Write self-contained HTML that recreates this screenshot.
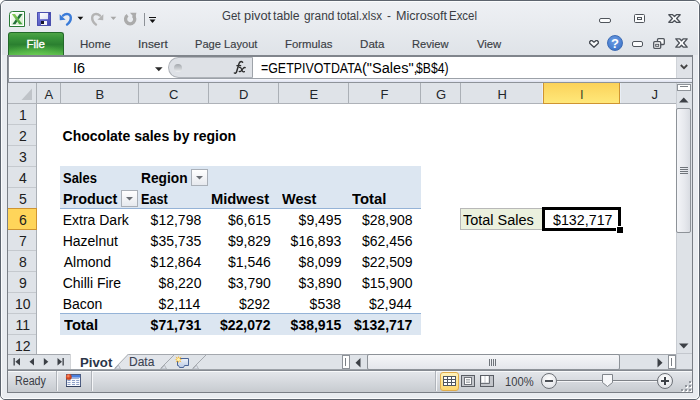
<!DOCTYPE html>
<html><head><meta charset="utf-8">
<style>
*{box-sizing:border-box}
html,body{margin:0;padding:0}
body{width:700px;height:400px;overflow:hidden;position:relative;background:#fff;font-family:"Liberation Sans",sans-serif}
.a{position:absolute}
.t{position:absolute;white-space:pre;line-height:1;transform-origin:0 0;font-family:"Liberation Sans",sans-serif}
.vl{position:absolute;width:1px;background:#abb0b6}
.hl{position:absolute;height:1px;background:#c5c9ce}
svg{position:absolute;overflow:visible}
</style></head><body>

<!-- window frame background -->
<div class="a" style="left:0;top:0;width:700px;height:400px;background:#e9ecf0;border:1px solid #5d646e;border-radius:6px 6px 5px 5px"></div>
<div class="a" style="left:1px;top:1px;width:698px;height:398px;border:1px solid #fbfcfd;border-radius:5px 5px 4px 4px"></div>
<!-- title + tabs gradient -->
<div class="a" style="left:2px;top:2px;width:696px;height:53px;border-radius:4px 4px 0 0;background:linear-gradient(#eef0f4,#e8ebef 45%,#dfe3e8)"></div>

<!-- QAT: excel icon -->
<svg style="left:9px;top:11px" width="16" height="16" viewBox="0 0 16 16">
  <defs><linearGradient id="xl" x1="0" y1="0" x2="1" y2="1"><stop offset="0" stop-color="#8fd05a"/><stop offset="1" stop-color="#3d9e3c"/></linearGradient>
  <linearGradient id="xb" x1="0" y1="0" x2="1" y2="1"><stop offset="0" stop-color="#ffffff"/><stop offset="1" stop-color="#d3ebc9"/></linearGradient></defs>
  <path d="M3.5 0.5H15.5V15.5H0.5V3.5Q0.5 0.5 3.5 0.5Z" fill="#fff" stroke="#2a7a36"/>
  <rect x="2" y="2" width="12" height="12" fill="url(#xb)"/>
  <path d="M10.6 3H13.6L6.4 13.2H3.4Z" fill="#23713a"/>
  <path d="M2.8 3H6L13.4 13.2H10.2Z" fill="url(#xl)"/>
</svg>
<div class="a" style="left:29px;top:13px;width:1px;height:13px;background:#8d9197"></div>
<!-- save -->
<svg style="left:37px;top:12px" width="14" height="14" viewBox="0 0 14 14">
  <defs><linearGradient id="sv" x1="0" y1="0" x2="1" y2="1"><stop offset="0" stop-color="#7b7fe0"/><stop offset="1" stop-color="#4146b0"/></linearGradient>
  <linearGradient id="sl" x1="0" y1="0" x2="1" y2="1"><stop offset="0" stop-color="#ffffff"/><stop offset="1" stop-color="#dfe3f2"/></linearGradient></defs>
  <path d="M0 0H14V13.8H0Z" fill="url(#sv)"/>
  <path d="M0.5 13.5V0.5H13.5V13.5Z" fill="none" stroke="#4a4fae" stroke-width="1"/>
  <rect x="3" y="1" width="8" height="6.2" fill="url(#sl)"/>
  <rect x="4" y="9" width="6" height="4" fill="#f4f4f8"/>
  <rect x="4" y="9" width="3" height="3" fill="#15152a"/>
  <rect x="12" y="1.5" width="1" height="1" fill="#2a2d70"/>
</svg>
<!-- undo -->
<svg style="left:59px;top:12px" width="14" height="14" viewBox="0 0 14 14">
  <path d="M4 3.6C7 1 11.5 1.5 11.8 5.5 12 8.5 10 11 8 12.6" fill="none" stroke="#3a7bd8" stroke-width="2.4" stroke-linecap="round"/>
  <path d="M0.6 2.2 0.8 8.2 6.6 7.8Z" fill="#3a7bd8"/>
</svg>
<svg style="left:77px;top:16px" width="7" height="5" viewBox="0 0 7 5"><path d="M0.5 0.8H6.3L3.4 4Z" fill="#111"/></svg>
<!-- redo (gray) -->
<svg style="left:90px;top:12px" width="14" height="14" viewBox="0 0 14 14">
  <path d="M10 3.6C7 1 2.5 1.5 2.2 5.5 2 8.5 4 11 6 12.6" fill="none" stroke="#b4b4b4" stroke-width="2.4" stroke-linecap="round"/>
  <path d="M13.4 2.2 13.2 8.2 7.4 7.8Z" fill="#b4b4b4"/>
</svg>
<svg style="left:110px;top:16px" width="7" height="5" viewBox="0 0 7 5"><path d="M0.5 0.8H6.3L3.4 4Z" fill="#a8a8a8"/></svg>
<!-- refresh (gray) -->
<svg style="left:123px;top:12px" width="14" height="14" viewBox="0 0 14 14">
  <path d="M4.6 3.4A4.6 4.6 0 1 0 10 3.6" fill="none" stroke="#ababab" stroke-width="3.3"/>
  <path d="M7 0.8H13.4L12.2 6.8Z" fill="#ababab"/>
</svg>
<div class="a" style="left:144px;top:13px;width:1px;height:13px;background:#8d9197"></div>
<div class="a" style="left:149px;top:17px;width:7px;height:1px;background:#111"></div>
<svg style="left:149px;top:19px" width="7" height="5" viewBox="0 0 7 5"><path d="M0.5 0.5H6.5L3.5 4Z" fill="#111"/></svg>

<!-- window controls -->
<div class="a" style="left:599px;top:18px;width:12px;height:5px;border:1.3px solid #50555c;border-radius:2px;background:#fbfcfd"></div>
<div class="a" style="left:634px;top:14px;width:11px;height:9px;border:1.3px solid #50555c;border-radius:1.5px;background:#fbfcfd"></div>
<div class="a" style="left:637px;top:17px;width:5px;height:3px;border:1px solid #50555c;"></div>
<svg style="left:668px;top:14px" width="13" height="9" viewBox="0 0 13 9"><path d="M0.8 0.7H4.6L6.5 2.5 8.4 0.7H12.2L8.6 4.5 12.2 8.3H8.4L6.5 6.5 4.6 8.3H0.8L4.4 4.5Z" fill="#fbfcfd" stroke="#4c5158" stroke-width="1.3" stroke-linejoin="round"/></svg>

<!-- ribbon right controls -->
<svg style="left:589px;top:40px" width="10" height="8" viewBox="0 0 10 8"><path d="M5 2.2 6.8 0.7H8.4L9.3 1.7V3.2L5 7.2 0.7 3.2V1.7L1.6 0.7H3.2Z" fill="#fbfcfd" stroke="#43484f" stroke-width="1.3" stroke-linejoin="round"/></svg>
<div class="a" style="left:607px;top:35px;width:16px;height:16px;border-radius:50%;background:radial-gradient(circle at 45% 35%,#6e9de2,#4a80d2 60%,#3567bb);border:1px solid #3d6cb5"></div>
<div class="a" style="left:607px;top:35.5px;width:16px;height:16px;color:#fff;font:bold 13px/16px 'Liberation Sans',sans-serif;text-align:center">?</div>
<div class="a" style="left:632px;top:41px;width:11px;height:6px;border:1.3px solid #50555c;border-radius:2px;background:#fbfcfd"></div>
<svg style="left:653px;top:38px" width="12" height="11" viewBox="0 0 12 11">
  <rect x="4.5" y="0.7" width="6.8" height="5.8" rx="1" fill="#fbfcfd" stroke="#50555c" stroke-width="1.3"/>
  <rect x="0.7" y="3.7" width="7" height="6.6" rx="1" fill="#fbfcfd" stroke="#50555c" stroke-width="1.3"/>
  <rect x="2.7" y="6.3" width="3" height="2" fill="none" stroke="#50555c" stroke-width="1"/>
</svg>
<svg style="left:675px;top:38px" width="13" height="10" viewBox="0 0 13 10"><path d="M0.8 0.8H4.6L6.5 2.8 8.4 0.8H12.2L8.6 5 12.2 9.2H8.4L6.5 7.2 4.6 9.2H0.8L4.4 5Z" fill="#fbfcfd" stroke="#4c5158" stroke-width="1.3" stroke-linejoin="round"/></svg>

<!-- File tab -->
<div class="a" style="left:8px;top:32px;width:56px;height:24px;border-radius:3px 3px 0 0;border:1px solid #23692a;border-bottom:none;background:linear-gradient(#4ea546 0%,#3a953b 20%,#2b8030 50%,#3f9c3b 75%,#5fbf4f 100%)"></div>
<div class="a" style="left:9px;top:33px;width:54px;height:22px;border-radius:2px 2px 0 0;background:radial-gradient(ellipse 60% 50% at 50% 100%,rgba(120,220,90,0.5),rgba(60,160,50,0) 100%)"></div>

<!-- ribbon bottom line -->
<div class="a" style="left:7px;top:55px;width:686px;height:2px;background:#80858c"></div>

<!-- formula bar area -->
<div class="a" style="left:8px;top:57px;width:684px;height:21px;background:#fff"></div>
<div class="a" style="left:7px;top:55px;width:1px;height:338px;background:#7a7f86"></div>
<div class="a" style="left:8px;top:57px;width:1px;height:26px;background:#8e9399"></div>
<div class="a" style="left:692px;top:55px;width:1px;height:338px;background:#7a7f86"></div>
<div class="a" style="left:7px;top:392px;width:686px;height:1px;background:#7a7f86"></div>
<!-- name box dropdown -->
<svg style="left:155px;top:67px" width="8" height="5" viewBox="0 0 8 5"><path d="M0 0.3H7.6L3.8 4.3Z" fill="#2a2a2a"/></svg>
<!-- fx capsule -->
<div class="a" style="left:168px;top:57px;width:85px;height:21px;background:#dee1e6;border-radius:11px 0 0 11px;border:1px solid #afb3b9;border-right:1px solid #9ea3a9"></div>
<div class="a" style="left:173.5px;top:63.5px;width:8.5px;height:8.5px;border-radius:50%;background:linear-gradient(#a3a7ac,#c9ccd0 55%,#eef0f2)"></div>
<svg style="left:233px;top:61px" width="14" height="14" viewBox="0 0 14 14">
  <path d="M9.6 1.2C8.2 0 6.6 0.6 6 2.6L3.6 10.8C3.2 12.2 2.2 12.6 1.4 12" fill="none" stroke="#2e2e2e" stroke-width="1.5" stroke-linecap="round"/>
  <path d="M3.4 4.6H8.2" stroke="#2e2e2e" stroke-width="1.3"/>
  <path d="M6.2 6.4C7.4 6 8 6.6 8.6 8.2L9.6 10.4C10 11 10.6 11 11.4 10.6M12.2 6.6C11.4 6.2 10.8 6.6 10 7.6L8.4 9.6C7.8 10.4 7.2 10.8 6.2 10.4" fill="none" stroke="#2e2e2e" stroke-width="1.3" stroke-linecap="round"/>
</svg>
<!-- expand button -->
<div class="a" style="left:676px;top:57px;width:16px;height:21px;background:#dfe2e7;border-left:1px solid #cfd3d8"></div>
<svg style="left:680px;top:64px" width="8" height="6" viewBox="0 0 8 6"><path d="M0.8 1 4 4.2 7.2 1" fill="none" stroke="#444" stroke-width="1.8"/></svg>

<div class="a" style="left:8px;top:78px;width:684px;height:1px;background:#9ca1a8"></div>
<div class="a" style="left:9px;top:79px;width:683px;height:3px;background:linear-gradient(#f8f9fc,#dde1f0)"></div>
<div class="a" style="left:8px;top:82px;width:684px;height:1px;background:#8e9399"></div>

<!-- column header -->
<div class="a" style="left:8px;top:83px;width:668px;height:20px;background:#dfe3e8"></div>
<svg style="left:21px;top:88px" width="12" height="13" viewBox="0 0 12 13"><path d="M11 0.5V12H0.5Z" fill="#bfc3c8"/></svg>
<div class="a" style="left:8px;top:103px;width:668px;height:1px;background:#aeb2b8"></div>
<div class="vl" style="left:36px;top:83px;height:20px"></div>
<div class="vl" style="left:60px;top:83px;height:20px"></div>
<div class="vl" style="left:138px;top:83px;height:20px"></div>
<div class="vl" style="left:208px;top:83px;height:20px"></div>
<div class="vl" style="left:278px;top:83px;height:20px"></div>
<div class="vl" style="left:348px;top:83px;height:20px"></div>
<div class="vl" style="left:420px;top:83px;height:20px"></div>
<div class="vl" style="left:460px;top:83px;height:20px"></div>
<!-- selected I header -->
<div class="a" style="left:543px;top:83px;width:77px;height:21px;background:linear-gradient(#fbd25a,#ffe87a);border:1px solid #cf9431;border-top:none"></div>
<div class="a" style="left:542px;top:83px;width:1px;height:20px;background:#e8eef6"></div>
<div class="a" style="left:620px;top:83px;width:1px;height:20px;background:#e8eef6"></div>

<!-- grid white -->
<div class="a" style="left:37px;top:104px;width:639px;height:250px;background:#fff"></div>
<!-- row header -->
<div class="a" style="left:8px;top:104px;width:28px;height:251px;background:#dfe3e8"></div>
<div class="vl" style="left:36px;top:104px;height:251px"></div>
<div class="hl" style="left:8px;top:124px;width:28px"></div>
<div class="hl" style="left:8px;top:145px;width:28px"></div>
<div class="hl" style="left:8px;top:166px;width:28px"></div>
<div class="hl" style="left:8px;top:187px;width:28px"></div>
<div class="hl" style="left:8px;top:250px;width:28px"></div>
<div class="hl" style="left:8px;top:271px;width:28px"></div>
<div class="hl" style="left:8px;top:292px;width:28px"></div>
<div class="hl" style="left:8px;top:313px;width:28px"></div>
<div class="hl" style="left:8px;top:334px;width:28px"></div>
<!-- selected row 6 -->
<div class="a" style="left:8px;top:208px;width:29px;height:22px;background:#ffd55a;border:1px solid #cf9431;border-left:none"></div>

<!-- pivot band -->
<div class="a" style="left:60px;top:166px;width:361px;height:42px;background:#dce6f1"></div>
<div class="a" style="left:60px;top:208px;width:361px;height:1px;background:#95b3d7"></div>
<div class="a" style="left:60px;top:313px;width:361px;height:1px;background:#95b3d7"></div>
<div class="a" style="left:60px;top:314px;width:361px;height:21px;background:#dce6f1"></div>
<!-- dropdown buttons -->
<div class="a" style="left:191px;top:169px;width:17px;height:17px;border:1px solid #a9afb7;background:linear-gradient(#ffffff,#e6e9ee)"></div>
<svg style="left:196px;top:176px" width="7" height="4" viewBox="0 0 7 4"><path d="M0 0H7L3.5 3.5Z" fill="#6a6e74"/></svg>
<div class="a" style="left:121px;top:190px;width:17px;height:17px;border:1px solid #a9afb7;background:linear-gradient(#ffffff,#e6e9ee)"></div>
<svg style="left:126px;top:197px" width="7" height="4" viewBox="0 0 7 4"><path d="M0 0H7L3.5 3.5Z" fill="#6a6e74"/></svg>

<!-- total sales box -->
<div class="a" style="left:460px;top:208px;width:84px;height:22px;background:#ebf0de;border:1px solid #b8b8b8"></div>
<!-- selection -->
<div class="a" style="left:542px;top:207px;width:79px;height:24px;border:3px solid #000;"></div>
<div class="a" style="left:545px;top:210px;width:73px;height:18px;background:#fff"></div>
<div class="a" style="left:616px;top:226px;width:7px;height:7px;background:#000;border:1px solid #fff;border-right:none;border-bottom:none"></div>

<!-- vertical scrollbar -->
<div class="a" style="left:676px;top:83px;width:16px;height:271px;background:#dee2e7;border-left:1px solid #c8ccd2"></div>
<div class="a" style="left:677px;top:84px;width:14px;height:7px;background:#fff;border:1px solid #8e9399"></div>
<div class="a" style="left:680px;top:86px;width:8px;height:1px;background:#7d8288"></div>
<svg style="left:679px;top:97px" width="10" height="6" viewBox="0 0 10 6"><path d="M0 5.5H9.5L4.75 0.5Z" fill="#3c4046"/></svg>
<div class="a" style="left:676px;top:108px;width:15px;height:125px;border:1px solid #8d9298;border-radius:2px;background:linear-gradient(90deg,#f4f5f8,#e6e8ed 60%,#d9dce2)"></div>
<div class="a" style="left:680px;top:167px;width:8px;height:7px;background:repeating-linear-gradient(#6f747a 0 1px,transparent 1px 2px)"></div>
<svg style="left:679px;top:343px" width="10" height="6" viewBox="0 0 10 6"><path d="M0 0.5H9.5L4.75 5.5Z" fill="#3c4046"/></svg>

<!-- sheet tab bar -->
<div class="a" style="left:8px;top:354px;width:684px;height:16px;background:#dfe3e8"></div>
<div class="a" style="left:8px;top:354px;width:684px;height:1px;background:#a4a8ae"></div>
<div class="a" style="left:8px;top:369px;width:684px;height:2px;background:linear-gradient(#9da2a8 50%,#858a91 50%)"></div>
<div class="a" style="left:70px;top:354px;width:1px;height:15px;background:#a4a8ae"></div>
<!-- nav arrows -->
<svg style="left:13px;top:358px" width="52" height="8" viewBox="0 0 52 8">
  <rect x="0.5" y="0" width="1.3" height="7.5" fill="#3c4046"/><path d="M7 0V7.5L2.4 3.75Z" fill="#3c4046"/>
  <path d="M21 0V7.5L16.5 3.75Z" fill="#3c4046"/>
  <path d="M30.8 0V7.5L35.3 3.75Z" fill="#3c4046"/>
  <path d="M44.5 0V7.5L49 3.75Z" fill="#3c4046"/><rect x="49.5" y="0" width="1.3" height="7.5" fill="#3c4046"/>
</svg>
<!-- tabs -->
<svg style="left:70px;top:354px" width="280" height="16" viewBox="0 0 280 16">
  <path d="M104 0H136.5L122.5 15H90Z" fill="#dfe3e8"/>
  <path d="M136.5 0.5L122.5 14.5M104 0.5H136.5" fill="none" stroke="#a4a8ae"/>
  <path d="M58.5 0H104.5L90.5 15H44.5Z" fill="#e2e5ea"/>
  <path d="M104.5 0.5L90.5 14.5M58.5 0.5H104.5" fill="none" stroke="#a4a8ae"/>
  <path d="M0.5 0H58.5L44.5 15H0.5Z" fill="#ffffff"/>
  <path d="M58.5 0L44.5 14.5" stroke="#a4a8ae" stroke-width="1"/>
  <g fill="#dde1ea" stroke="#a9adb3" stroke-width="0.8">
    <path d="M45 15L48.5 11.2 50.5 15Z"/>
    <path d="M91 15L94.5 11.2 96.5 15Z"/>
    <path d="M123 15L126.5 11.2 128.5 15Z"/>
  </g>
</svg>
<!-- new sheet icon -->
<svg style="left:174px;top:355px" width="16" height="14" viewBox="0 0 16 14">
  <defs><linearGradient id="ns" x1="0" y1="0" x2="0" y2="1"><stop offset="0" stop-color="#eef3fb"/><stop offset="1" stop-color="#b9c9e4"/></linearGradient></defs>
  <path d="M3.5 3.5H14.5V10.5H10.5L9.5 12.5H5.5L4.5 10.5H3.5Z" fill="url(#ns)" stroke="#4b6596" stroke-linejoin="round"/>
  <path d="M4.5 0.5 5 3 7.5 1.5 6 4 8.5 4.5 6 5 7.5 7.5 5 6 4.5 8.5 4 6 1.5 7.5 3 5 0.5 4.5 3 4 1.5 1.5 4 3Z" fill="#f7b52c"/>
  <circle cx="4.5" cy="4.5" r="1.6" fill="#fff3b0"/>
</svg>
<!-- h split + scroll -->
<div class="a" style="left:342px;top:355px;width:8px;height:14px;background:#fff;border:1px solid #8e9399"></div>
<div class="a" style="left:345px;top:358px;width:1px;height:8px;background:#7b8086"></div>
<svg style="left:355px;top:358px" width="6" height="10" viewBox="0 0 6 10"><path d="M5.5 0V9.5L0.5 4.75Z" fill="#3c4046"/></svg>
<div class="a" style="left:367px;top:354px;width:253px;height:16px;border:1px solid #8d9298;border-radius:2px;background:linear-gradient(#f5f6f8,#e4e6eb)"></div>
<div class="a" style="left:489px;top:359px;width:7px;height:7px;background:repeating-linear-gradient(90deg,#6f747a 0 1px,transparent 1px 2px)"></div>
<svg style="left:657px;top:358px" width="6" height="10" viewBox="0 0 6 10"><path d="M0.5 0V9.5L5.5 4.75Z" fill="#3c4046"/></svg>
<div class="a" style="left:668px;top:355px;width:8px;height:14px;background:#fff;border:1px solid #8e9399"></div>
<div class="a" style="left:671px;top:358px;width:1px;height:8px;background:#7b8086"></div>
<div class="a" style="left:676px;top:353px;width:16px;height:16px;background:#dee2e7;border-left:1px solid #c8ccd2;border-top:1px solid #c3c7cd"></div>

<!-- status bar -->
<div class="a" style="left:8px;top:371px;width:684px;height:21px;background:linear-gradient(#e4e7eb,#d6d9de 50%,#c7cbd0)"></div>
<div class="a" style="left:8px;top:371px;width:684px;height:1px;background:#f8f9fa"></div>
<div class="a" style="left:56px;top:371px;width:1px;height:20px;background:#b0b4ba;box-shadow:1px 0 0 #f5f6f8"></div>
<div class="a" style="left:91px;top:371px;width:1px;height:20px;background:#b0b4ba;box-shadow:1px 0 0 #f5f6f8"></div>
<div class="a" style="left:435px;top:371px;width:1px;height:20px;background:#b0b4ba;box-shadow:1px 0 0 #f5f6f8"></div>
<!-- macro icon -->
<svg style="left:66px;top:374px" width="15" height="13" viewBox="0 0 15 13">
  <defs><radialGradient id="rb" cx="0.4" cy="0.35" r="0.6"><stop offset="0" stop-color="#f9a27a"/><stop offset="0.5" stop-color="#e0502a"/><stop offset="1" stop-color="#b83a18"/></radialGradient></defs>
  <rect x="0.5" y="0.5" width="14" height="12" fill="#f7f9fd" stroke="#4d5d82"/>
  <rect x="0" y="12" width="15" height="1" fill="#33405e"/>
  <rect x="1" y="1" width="13" height="2.6" fill="#4a7fdc"/>
  <g fill="#8ea0c8"><rect x="1.5" y="6" width="3" height="1"/><rect x="6" y="6" width="3" height="1"/><rect x="10.2" y="6" width="3" height="1"/>
  <rect x="1.5" y="8" width="3" height="1"/><rect x="6" y="8" width="3" height="1"/><rect x="10.2" y="8" width="3" height="1"/>
  <rect x="1.5" y="10" width="3" height="1"/><rect x="6" y="10" width="3" height="1"/><rect x="10.2" y="10" width="3" height="1"/>
  <rect x="5" y="4.2" width="8" height="0.8"/></g>
  <circle cx="2.8" cy="2.9" r="2.9" fill="url(#rb)"/>
</svg>
<!-- view buttons -->
<div class="a" style="left:440px;top:372px;width:19px;height:19px;border-radius:3px;border:1px solid #e0ad4c;background:linear-gradient(#fff3bd,#fed66b)"></div>
<svg style="left:443px;top:376px" width="13" height="10" viewBox="0 0 13 10">
  <rect x="0" y="0" width="13" height="10" fill="#4f5661"/>
  <g fill="#fff"><rect x="1" y="1" width="3" height="2"/><rect x="5" y="1" width="3" height="2"/><rect x="9" y="1" width="3" height="2"/>
  <rect x="1" y="4" width="3" height="2"/><rect x="5" y="4" width="3" height="2"/><rect x="9" y="4" width="3" height="2"/>
  <rect x="1" y="7" width="3" height="2"/><rect x="5" y="7" width="3" height="2"/><rect x="9" y="7" width="3" height="2"/></g>
</svg>
<svg style="left:461px;top:375px" width="14" height="12" viewBox="0 0 14 12">
  <rect x="0.5" y="0.5" width="13" height="11" fill="#c4c7cc" stroke="#5a5e65"/>
  <rect x="3.5" y="2.5" width="7" height="7" fill="#fdfdfd" stroke="#6f737a"/>
  <path d="M5 4.5H9M5 6H9M5 7.5H9" stroke="#a5a9ae" stroke-width="0.9"/>
</svg>
<svg style="left:480px;top:375px" width="14" height="12" viewBox="0 0 14 12">
  <rect x="0.5" y="0.5" width="13" height="11" fill="#c3c6cb" stroke="#5a5e65"/>
  <rect x="1.5" y="1" width="3" height="6.5" fill="#fff"/>
  <rect x="5.5" y="1" width="3" height="6.5" fill="#fff"/>
  <path d="M9.5 0.5V8.5H1" stroke="#6f737a" fill="none"/>
</svg>
<!-- zoom slider -->
<div class="a" style="left:557px;top:380px;width:101px;height:1px;background:#7e8288;box-shadow:0 1px 0 #f3f4f6"></div>
<div class="a" style="left:541px;top:373px;width:16px;height:16px;border-radius:50%;border:1px solid #6d7177;background:radial-gradient(circle at 50% 35%,#ffffff,#e4e6ea 70%,#cfd2d7)"></div>
<div class="a" style="left:545px;top:380px;width:8px;height:2px;background:#4d5157"></div>
<div class="a" style="left:657px;top:373px;width:16px;height:16px;border-radius:50%;border:1px solid #6d7177;background:radial-gradient(circle at 50% 35%,#ffffff,#e4e6ea 70%,#cfd2d7)"></div>
<div class="a" style="left:661px;top:380px;width:8px;height:2px;background:#3f4349"></div>
<div class="a" style="left:664px;top:377px;width:2px;height:8px;background:#3c4046"></div>
<svg style="left:602px;top:374px" width="11" height="13" viewBox="0 0 11 13"><path d="M0.5 0.5H10.5V8.5L5.5 12.5 0.5 8.5Z" fill="#f6f7f9" stroke="#80858b" stroke-width="1"/></svg>
<!-- grip -->
<svg style="left:680px;top:380px" width="12" height="12" viewBox="0 0 12 12">
  <g fill="#fff"><rect x="10" y="2" width="2" height="2"/><rect x="6" y="6" width="2" height="2"/><rect x="10" y="6" width="2" height="2"/><rect x="2" y="10" width="2" height="2"/><rect x="6" y="10" width="2" height="2"/><rect x="10" y="10" width="2" height="2"/></g>
  <g fill="#8f949b"><rect x="9" y="1" width="2" height="2"/><rect x="5" y="5" width="2" height="2"/><rect x="9" y="5" width="2" height="2"/><rect x="1" y="9" width="2" height="2"/><rect x="5" y="9" width="2" height="2"/><rect x="9" y="9" width="2" height="2"/></g>
</svg>

<div class="t" style="left:222.44px;top:10.00px;font-size:12px;color:#3a3d44;transform:scaleX(0.9556);">Get</div>
<div class="t" style="left:243.53px;top:10.00px;font-size:12px;color:#3a3d44;transform:scaleX(1.0708);">pivot</div>
<div class="t" style="left:273.10px;top:10.00px;font-size:12px;color:#3a3d44;transform:scaleX(1.0192);">table</div>
<div class="t" style="left:303.60px;top:10.00px;font-size:12px;color:#3a3d44;transform:scaleX(0.9900);">grand</div>
<div class="t" style="left:337.30px;top:10.00px;font-size:12px;color:#3a3d44;transform:scaleX(0.9638);">total.xlsx</div>
<div class="t" style="left:387.30px;top:10.00px;font-size:12px;color:#3a3d44;transform:scaleX(0.9750);">-</div>
<div class="t" style="left:396.45px;top:10.00px;font-size:12px;color:#3a3d44;transform:scaleX(1.0479);">Microsoft</div>
<div class="t" style="left:449.25px;top:10.00px;font-size:12px;color:#3a3d44;transform:scaleX(0.9536);">Excel</div>
<div class="t" style="left:26.40px;top:39.00px;font-size:11.5px;color:#ffffff;-webkit-text-stroke:0.35px #ffffff;">File</div>
<div class="t" style="left:80.00px;top:39.00px;font-size:11.5px;color:#3a3d44;-webkit-text-stroke:0.15px #3a3d44;">Home</div>
<div class="t" style="left:137.77px;top:39.00px;font-size:11.5px;color:#3a3d44;-webkit-text-stroke:0.15px #3a3d44;transform:scaleX(1.0321);">Insert</div>
<div class="t" style="left:195.03px;top:39.00px;font-size:11.5px;color:#3a3d44;-webkit-text-stroke:0.15px #3a3d44;transform:scaleX(0.9672);">Page Layout</div>
<div class="t" style="left:285.21px;top:39.00px;font-size:11.5px;color:#3a3d44;-webkit-text-stroke:0.15px #3a3d44;transform:scaleX(0.9894);">Formulas</div>
<div class="t" style="left:360.39px;top:39.00px;font-size:11.5px;color:#3a3d44;-webkit-text-stroke:0.15px #3a3d44;transform:scaleX(1.0087);">Data</div>
<div class="t" style="left:412.23px;top:39.00px;font-size:11.5px;color:#3a3d44;-webkit-text-stroke:0.15px #3a3d44;transform:scaleX(0.9676);">Review</div>
<div class="t" style="left:477.30px;top:39.00px;font-size:11.5px;color:#3a3d44;-webkit-text-stroke:0.15px #3a3d44;transform:scaleX(0.9800);">View</div>
<div class="t" style="left:72.67px;top:61.00px;font-size:14px;color:#000;transform:scaleX(1.0300);">I6</div>
<div class="t" style="left:261.12px;top:60.50px;font-size:14px;color:#000;transform:scaleX(0.8850);">=GETPIVOTDATA</div>
<div class="t" style="left:361.96px;top:60.50px;font-size:14px;color:#000;transform:scaleX(1.0392);">("Sales",</div>
<div class="t" style="left:416.40px;top:60.50px;font-size:14px;color:#000;transform:scaleX(0.8703);">$B$4)</div>
<div class="t" style="left:44.50px;top:88.00px;font-size:13px;color:#22262b;">A</div>
<div class="t" style="left:95.50px;top:88.00px;font-size:13px;color:#22262b;">B</div>
<div class="t" style="left:169.00px;top:88.00px;font-size:13px;color:#22262b;">C</div>
<div class="t" style="left:239.00px;top:88.00px;font-size:13px;color:#22262b;">D</div>
<div class="t" style="left:309.50px;top:88.00px;font-size:13px;color:#22262b;">E</div>
<div class="t" style="left:380.50px;top:88.00px;font-size:13px;color:#22262b;">F</div>
<div class="t" style="left:436.00px;top:88.00px;font-size:13px;color:#22262b;">G</div>
<div class="t" style="left:497.50px;top:88.00px;font-size:13px;color:#22262b;">H</div>
<div class="t" style="left:580.00px;top:88.00px;font-size:13px;color:#3d4a2a;">I</div>
<div class="t" style="left:651.50px;top:88.00px;font-size:13px;color:#22262b;">J</div>
<div class="t" style="left:19.00px;top:108.00px;font-size:14px;color:#202020;">1</div>
<div class="t" style="left:19.00px;top:129.00px;font-size:14px;color:#202020;">2</div>
<div class="t" style="left:19.00px;top:150.00px;font-size:14px;color:#202020;">3</div>
<div class="t" style="left:19.00px;top:171.00px;font-size:14px;color:#202020;">4</div>
<div class="t" style="left:19.00px;top:192.00px;font-size:14px;color:#202020;">5</div>
<div class="t" style="left:19.00px;top:213.00px;font-size:14px;color:#202020;">6</div>
<div class="t" style="left:19.00px;top:234.00px;font-size:14px;color:#202020;">7</div>
<div class="t" style="left:19.00px;top:255.00px;font-size:14px;color:#202020;">8</div>
<div class="t" style="left:19.00px;top:276.00px;font-size:14px;color:#202020;">9</div>
<div class="t" style="left:15.00px;top:297.00px;font-size:14px;color:#202020;">10</div>
<div class="t" style="left:15.50px;top:318.00px;font-size:14px;color:#202020;">11</div>
<div class="t" style="left:15.00px;top:339.00px;font-size:14px;color:#202020;">12</div>
<div class="t" style="left:62.60px;top:129.00px;font-size:14px;font-weight:bold;color:#000;">Chocolate sales by region</div>
<div class="t" style="left:62.77px;top:171.00px;font-size:14px;font-weight:bold;color:#000;transform:scaleX(0.9257);">Sales</div>
<div class="t" style="left:140.92px;top:171.00px;font-size:14px;font-weight:bold;color:#000;transform:scaleX(0.9826);">Region</div>
<div class="t" style="left:62.67px;top:192.00px;font-size:14px;font-weight:bold;color:#000;transform:scaleX(1.0288);">Product</div>
<div class="t" style="left:141.00px;top:192.00px;font-size:14px;font-weight:bold;color:#000;transform:scaleX(0.9034);">East</div>
<div class="t" style="left:211.15px;top:192.00px;font-size:14px;font-weight:bold;color:#000;transform:scaleX(1.0519);">Midwest</div>
<div class="t" style="left:281.50px;top:192.00px;font-size:14px;font-weight:bold;color:#000;transform:scaleX(1.0364);">West</div>
<div class="t" style="left:351.80px;top:192.00px;font-size:14px;font-weight:bold;color:#000;transform:scaleX(1.0594);">Total</div>
<div class="t" style="left:62.70px;top:213.00px;font-size:14px;color:#000;">Extra Dark</div>
<div class="t" style="left:150.60px;top:213.00px;font-size:14px;color:#000;">$12,798</div>
<div class="t" style="left:228.00px;top:213.00px;font-size:14px;color:#000;">$6,615</div>
<div class="t" style="left:298.60px;top:213.00px;font-size:14px;color:#000;">$9,495</div>
<div class="t" style="left:362.00px;top:213.00px;font-size:14px;color:#000;">$28,908</div>
<div class="t" style="left:62.70px;top:234.00px;font-size:14px;color:#000;">Hazelnut</div>
<div class="t" style="left:150.60px;top:234.00px;font-size:14px;color:#000;">$35,735</div>
<div class="t" style="left:228.00px;top:234.00px;font-size:14px;color:#000;">$9,829</div>
<div class="t" style="left:290.60px;top:234.00px;font-size:14px;color:#000;">$16,893</div>
<div class="t" style="left:362.00px;top:234.00px;font-size:14px;color:#000;">$62,456</div>
<div class="t" style="left:63.70px;top:255.00px;font-size:14px;color:#000;">Almond</div>
<div class="t" style="left:150.60px;top:255.00px;font-size:14px;color:#000;">$12,864</div>
<div class="t" style="left:228.00px;top:255.00px;font-size:14px;color:#000;">$1,546</div>
<div class="t" style="left:298.60px;top:255.00px;font-size:14px;color:#000;">$8,099</div>
<div class="t" style="left:362.00px;top:255.00px;font-size:14px;color:#000;">$22,509</div>
<div class="t" style="left:62.70px;top:276.00px;font-size:14px;color:#000;">Chilli Fire</div>
<div class="t" style="left:158.60px;top:276.00px;font-size:14px;color:#000;">$8,220</div>
<div class="t" style="left:228.00px;top:276.00px;font-size:14px;color:#000;">$3,790</div>
<div class="t" style="left:298.60px;top:276.00px;font-size:14px;color:#000;">$3,890</div>
<div class="t" style="left:362.00px;top:276.00px;font-size:14px;color:#000;">$15,900</div>
<div class="t" style="left:62.70px;top:297.00px;font-size:14px;color:#000;">Bacon</div>
<div class="t" style="left:158.60px;top:297.00px;font-size:14px;color:#000;">$2,114</div>
<div class="t" style="left:239.00px;top:297.00px;font-size:14px;color:#000;">$292</div>
<div class="t" style="left:309.60px;top:297.00px;font-size:14px;color:#000;">$538</div>
<div class="t" style="left:369.00px;top:297.00px;font-size:14px;color:#000;">$2,944</div>
<div class="t" style="left:63.70px;top:318.00px;font-size:14px;font-weight:bold;color:#000;transform:scaleX(1.0500);">Total</div>
<div class="t" style="left:150.60px;top:318.00px;font-size:14px;font-weight:bold;color:#000;">$71,731</div>
<div class="t" style="left:220.00px;top:318.00px;font-size:14px;font-weight:bold;color:#000;">$22,072</div>
<div class="t" style="left:290.60px;top:318.00px;font-size:14px;font-weight:bold;color:#000;">$38,915</div>
<div class="t" style="left:354.00px;top:318.00px;font-size:14px;font-weight:bold;color:#000;">$132,717</div>
<div class="t" style="left:463.00px;top:213.00px;font-size:14px;color:#000;transform:scaleX(1.0338);">Total Sales</div>
<div class="t" style="left:552.60px;top:213.00px;font-size:14px;color:#000;transform:scaleX(1.0190);">$132,717</div>
<div class="t" style="left:79.54px;top:356.60px;font-size:12.5px;font-weight:bold;color:#2c3648;transform:scaleX(1.0567);">Pivot</div>
<div class="t" style="left:129.34px;top:356.40px;font-size:12.5px;color:#3b4352;-webkit-text-stroke:0.1px #3b4352;transform:scaleX(0.9600);">Data</div>
<div class="t" style="left:15.41px;top:375.00px;font-size:12px;color:#3a3d44;transform:scaleX(0.8912);">Ready</div>
<div class="t" style="left:504.97px;top:375.60px;font-size:12px;color:#3a3d44;transform:scaleX(0.9310);">100%</div>

</body></html>
